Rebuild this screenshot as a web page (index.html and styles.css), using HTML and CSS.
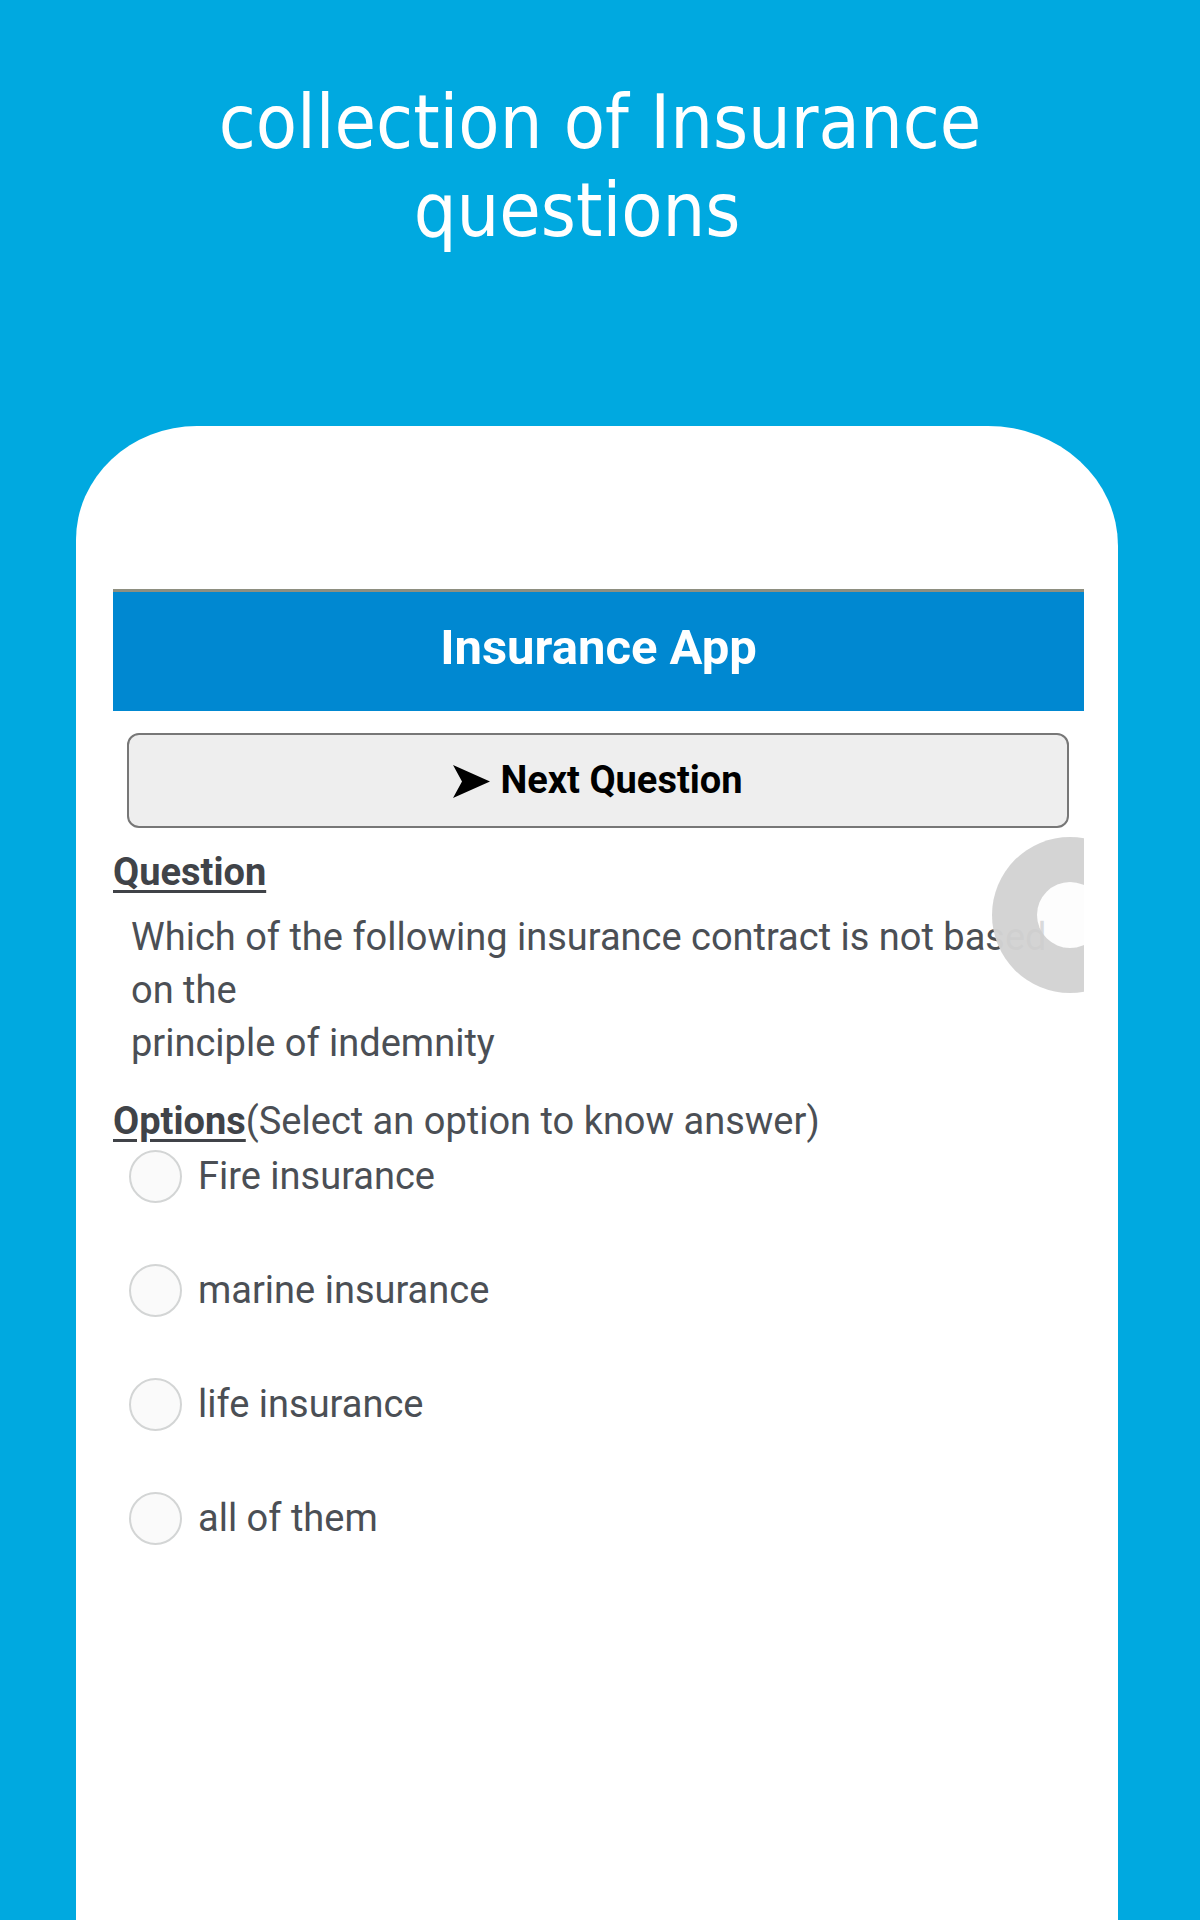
FILE: index.html
```html
<!DOCTYPE html>
<html>
    <head>
    <link rel="stylesheet" href="styles.css">
        <title>Insurance App</title>
    </head>
    <body>
        <div class="hero">
            <h1 class="hero-title">collection of Insurance<br><span class="hero-second">questions</span></h1>
        </div>
        <div class="phone">
            <div class="screen">
                <div class="app-bar">Insurance App</div>
                <button class="next-button">
                    <svg class="next-arrow" width="37" height="33" viewBox="0 0 37 33"><polygon points="0,0 37,16.5 0,33 9,16.5" fill="#000"/></svg>
                    Next Question
                </button>
                <div class="label">Question</div>
                <p class="question-text">Which of the following insurance contract is not based on the<br>principle of indemnity</p>
                <div class="options-title"><span class="label">Options</span>(Select an option to know answer)</div>
                <ul class="options">
                    <li class="option"><span class="radio"></span>Fire insurance</li>
                    <li class="option"><span class="radio"></span>marine insurance</li>
                    <li class="option"><span class="radio"></span>life insurance</li>
                    <li class="option"><span class="radio"></span>all of them</li>
                </ul>
                <!-- floating touch ring on the right edge -->
                <div class="touch-ring"></div>
            </div>
        </div>
    </body>
</html>
```

FILE: styles.css
```css
body {
  margin: 0;
  background-color: #00a9e0;
  font-family: Roboto, "Liberation Sans", sans-serif;
  height: 1920px;
  overflow: hidden;
}

.hero {
  padding-top: 78px;
  height: 426px;
  box-sizing: border-box;
}

.hero-title {
  margin: 0;
  color: #fff;
  font-family: "DejaVu Sans Condensed", "DejaVu Sans", sans-serif;
  font-stretch: condensed;
  font-weight: normal;
  font-size: 75px;
  line-height: 88px;
  text-align: center;
}

.hero-second {
  padding-right: 46px;
}

.phone {
  margin-left: 76px;
  width: 1042px;
  height: 1494px;
  background-color: #fff;
  border-radius: 121px 130px 0 0 / 114px 120px 0 0;
  padding: 163px 34px 0 37px;
  box-sizing: border-box;
}

.screen {
  position: relative;
  overflow: hidden;
  height: 100%;
}

.app-bar {
  border-top: 3px solid #8e8f80;
  background-color: #0088d1;
  height: 122px;
  padding-bottom: 8px;
  box-sizing: border-box;
  display: flex;
  justify-content: center;
  align-items: center;
  color: #fff;
  font-weight: bold;
  font-size: 49px;
}

.next-button {
  display: flex;
  justify-content: center;
  align-items: center;
  margin: 22px 15px 0 14px;
  width: calc(100% - 29px);
  height: 95px;
  border: 2px solid #777;
  border-radius: 12px;
  background-color: #eee;
  font-family: Roboto, sans-serif;
  font-weight: bold;
  font-size: 38px;
  color: #000;
  padding: 0 0 2px 0;
}

.next-arrow {
  margin-right: 10px;
  margin-top: 4px;
}

.label {
  font-weight: bold;
  font-size: 38px;
  color: #404348;
  text-decoration: underline;
  text-underline-offset: 5px;
}

div.label {
  margin-top: 22px;
  line-height: 44px;
}

.question-text {
  margin: 17px 0 0 18px;
  padding-right: 20px;
  font-size: 38px;
  line-height: 53px;
  color: #4b4f55;
}

.options-title {
  margin-top: 29px;
  font-size: 38px;
  line-height: 44px;
  color: #4b4f55;
}

.options {
  list-style: none;
  margin: 0;
  padding: 0 0 0 16px;
}

.option {
  display: flex;
  align-items: center;
  height: 114px;
  margin-top: -26px;
  margin-bottom: 26px;
  font-size: 38px;
  color: #4b4f55;
}

.option:first-child {
  margin-top: -24px;
}

.radio {
  width: 49px;
  height: 49px;
  border: 2px solid #d3d5d5;
  border-radius: 50%;
  background-color: #fafafa;
  margin-right: 16px;
}

.touch-ring {
  position: absolute;
  left: 879px;
  top: 248px;
  width: 66px;
  height: 66px;
  border: 45px solid rgba(206, 206, 206, 0.85);
  border-radius: 50%;
  background-color: rgba(252, 252, 252, 0.8);
}
```
